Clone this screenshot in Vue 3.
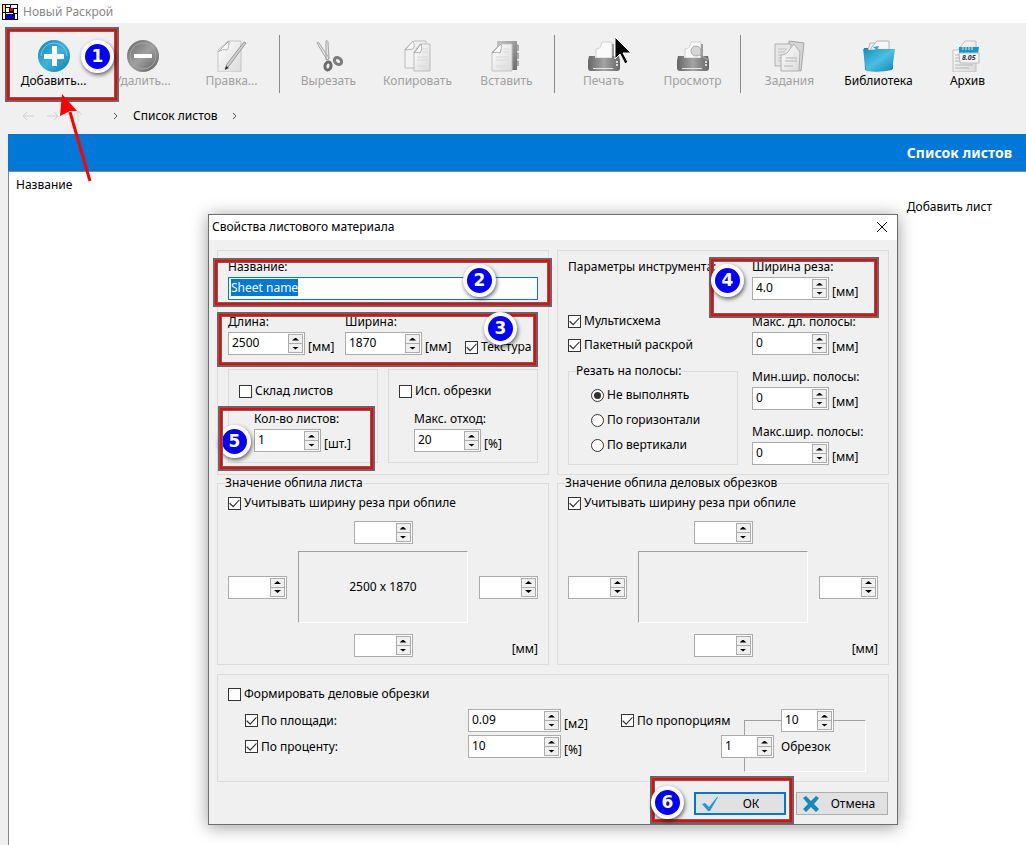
<template>
  <div class="app">
    <header class="titlebar">
      <svg class="app-icon" viewBox="0 0 16 16">
        <rect width="16" height="16" fill="#000" />
        <rect x="1" y="1" width="2" height="7" fill="#ffe600" />
        <rect x="4" y="1" width="4" height="2" fill="#fff" />
        <rect x="9" y="1" width="6" height="3" fill="#fff" />
        <rect x="4" y="4" width="3" height="4" fill="#fff" />
        <rect x="8" y="4" width="3" height="3" fill="#e00000" />
        <rect x="12" y="5" width="3" height="4" fill="#fff" />
        <rect x="1" y="9" width="2" height="6" fill="#fff" />
        <rect x="4" y="9" width="7" height="1" fill="#fff" />
        <rect x="4" y="11" width="8" height="4" fill="#0000e0" />
        <rect x="13" y="10" width="2" height="5" fill="#fff" />
      </svg>
      <span>Новый Раскрой</span>
    </header>

    <nav class="toolbar">
      <template v-for="(group, i) in toolGroups" :key="i">
        <span v-if="i > 0" class="divider"></span>
        <button v-for="tool in group" :key="tool.icon" class="tool" :disabled="tool.disabled">
          <svg class="tool-icon" viewBox="0 0 32 32">
            <g v-if="tool.icon === 'add'">
              <circle cx="16" cy="16" r="16" fill="url(#blueDisc)" />
              <path d="M3 16a13 13 0 0 1 26 0" fill="none" stroke="#7cc8e4" stroke-width="1" />
              <path d="M14 6h5v8h7v5h-7v7h-5v-7H6v-5h8z" fill="#fff" />
            </g>
            <g v-else-if="tool.icon === 'remove'">
              <circle cx="16" cy="16" r="16" fill="url(#grayDisc)" />
              <circle cx="16" cy="16" r="13" fill="none" stroke="#a5a5a5" stroke-width="1" />
              <rect x="7" y="14" width="18" height="4" fill="#fff" />
            </g>
            <g v-else-if="tool.icon === 'edit'">
              <path d="M12 1h13v31H2V10z" fill="url(#paper)" stroke="#c4c4c4" />
              <path d="M2 12L13 1c0 6-1 8-2 9-3-1-6 0-9 2z" fill="#f8f8f8" stroke="#b0b0b0" />
              <path d="M28 2l2 1-17 23-4 3 2-5z" fill="#cfcfcf" stroke="#9a9a9a" />
              <path d="M9 30l1-4 3 2z" fill="#333" />
            </g>
            <g v-else-if="tool.icon === 'cut'">
              <path d="M4 3c0-1 1-1 2 0l10 15-2 2zM13 1c1-1 2 0 2 1l1 17-3 1z" fill="#e4e4e4" stroke="#a4a4a4" />
              <ellipse cx="15" cy="26" rx="3" ry="4" fill="#f0f0f0" stroke="#6c6c6c" stroke-width="3" transform="rotate(12 15 26)" />
              <ellipse cx="25" cy="21" rx="3" ry="4" fill="#f0f0f0" stroke="#7c7c7c" stroke-width="3" transform="rotate(-50 25 21)" />
            </g>
            <g v-else-if="tool.icon === 'copy'">
              <path d="M12 1h12v27H3V9z" fill="#f2f2f2" stroke="#bcbcbc" />
              <path d="M3 10l8-9c2 3 1 7 0 8z" fill="#fafafa" stroke="#b4b4b4" />
              <path d="M18 4h10v27H12V12z" fill="url(#paper)" stroke="#bcbcbc" />
              <path d="M12 13l7-9c1 3 1 6-1 9-2-1-4-1-6 0z" fill="#fff" stroke="#a8a8a8" />
              <path d="M20 9h6M20 12h6M15 17h11M15 20h11M15 26h8" stroke="#d8d8d8" />
            </g>
            <g v-else-if="tool.icon === 'paste'">
              <path d="M6 1h20v29H6z" fill="url(#folder)" />
              <path d="M26 4l2 1v6h-2zM26 12l2 1v6h-2zM26 20l2 1v5h-2z" fill="#a9a9a9" />
              <path d="M9 4h12v27H1V12z" fill="url(#paper)" stroke="#c4c4c4" />
              <path d="M1 13l9-9c1 3 0 6-1 9-2-1-5-1-8 0z" fill="#fff" stroke="#a8a8a8" />
              <path d="M12 9h6M12 12h6M5 17h13M5 20h13M5 26h9" stroke="#d8d8d8" />
            </g>
            <g v-else-if="tool.icon === 'print' || tool.icon === 'preview'">
              <path d="M14 2h10v16H8V9c3-1 4 1 6-7z" fill="#fafafa" stroke="#cfcfcf" />
              <path d="M24 4h2v13h-2z" fill="#9d9d9d" />
              <path d="M1 16h6v2h17v-2h7l1 5v7q0 3-3 3H3q-3 0-3-3v-7z" fill="url(#printer)" />
              <path d="M5 28h20v1H5z" fill="#e4e4e4" />
              <path d="M28 22h2M28 25h2" stroke="#ddd" stroke-width="2" />
              <g v-if="tool.icon === 'preview'">
                <circle cx="19" cy="11" r="5" fill="#d6d6d6" stroke="#a8a8a8" />
                <path d="M23 15l8 5" stroke="#9a9a9a" stroke-width="2" />
              </g>
            </g>
            <g v-else-if="tool.icon === 'tasks'">
              <path d="M15 1l15 2-3 28-14-2z" fill="#d6d6d6" stroke="#a4a4a4" />
              <path d="M1 4h16v22H1z" fill="#e6e6e6" stroke="#b0b0b0" />
              <path d="M4 9h9M4 12h7M4 15h5M4 18h4M4 21h4" stroke="#c0c0c0" />
              <path d="M16 9L20 4l6 8-1 19H7V15q6 0 9-6z" fill="url(#paper)" stroke="#b0b0b0" />
              <path d="M12 18h11M11 21h12M10 26h9" stroke="#b8b8b8" />
            </g>
            <g v-else-if="tool.icon === 'library'">
              <path d="M1 8h8l2 3h19v18q-14 4-28 1z" fill="#1586ad" />
              <path d="M7 3h12l-1 11H4z" fill="#ededed" stroke="#bababa" />
              <path d="M14 1h12v14H8V8z" fill="#f6f6f6" stroke="#b4b4b4" />
              <path d="M10 7l6-1-2 4z" fill="#2aa5d0" />
              <path d="M0 9q2 2 15 0h17l-3 21q-13 3-26 1z" fill="url(#blueFolder)" />
            </g>
            <g v-else>
              <path d="M13 1h11v31H1V10h5z" fill="url(#paper)" stroke="#c0c0c0" />
              <path d="M3 15h8M3 18h8M3 21h8M3 25h18M3 28h14" stroke="#b4b4b4" />
              <path d="M7 7h20l-1 7H7z" fill="#1799c6" />
              <path d="M11 6v4M14 6v4M17 6v4M20 6v4" stroke="#d7eef6" />
              <path d="M7 13h20v10H8z" fill="#f4f4f4" stroke="#bbb" />
              <text x="10" y="20" class="cal-text">8.05</text>
            </g>
          </svg>
          <span>{{ tool.label }}</span>
        </button>
      </template>
    </nav>

    <nav class="crumbs">
      <svg class="nav-arrow" viewBox="0 0 12 12"><path d="M12 6H1M5 2L1 6l4 4" /></svg>
      <svg class="nav-arrow" viewBox="0 0 12 12"><path d="M0 6h11M7 2l4 4-4 4" /></svg>
      <svg class="nav-arrow" viewBox="0 0 12 12"><path d="M6 12V1M2 5l4-4 4 4" /></svg>
      <svg class="chevron first" viewBox="0 0 6 8"><path d="M1 1l3 3-3 3" /></svg>
      <a href="#" class="crumb">Список листов</a>
      <svg class="chevron" viewBox="0 0 6 8"><path d="M1 1l3 3-3 3" /></svg>
    </nav>

    <main class="list">
      <h1 class="list-title">Список листов</h1>
      <div class="list-body">
        <span class="column-name">Название</span>
        <a href="#" class="add-link">Добавить лист</a>
      </div>
    </main>

    <section class="dialog" role="dialog" aria-labelledby="dialog-title">
      <header class="dialog-head">
        <h2 id="dialog-title">Свойства листового материала</h2>
        <button class="close" aria-label="Закрыть">
          <svg viewBox="0 0 12 12"><path d="M1 1l10 10M11 1L1 11" /></svg>
        </button>
      </header>

      <form class="dialog-body" @submit.prevent>
        <div class="columns">
          <div class="panel">
            <div class="field">
              <label for="name">Название:</label>
              <input id="name" ref="nameInput" v-model="form.name" class="name-input" type="text" spellcheck="false" />
            </div>
            <div class="size-row">
              <div class="field">
                <label for="length">Длина:</label>
                <div class="measure"><SpinBox id="length" v-model="form.length" class="w77" /><span>[мм]</span></div>
              </div>
              <div class="field">
                <label for="width">Ширина:</label>
                <div class="measure"><SpinBox id="width" v-model="form.width" class="w77" /><span>[мм]</span></div>
              </div>
              <label class="check texture"><input v-model="form.texture" type="checkbox" />Текстура</label>
            </div>
            <div class="boxes">
              <div class="box">
                <label class="check"><input v-model="form.stock" type="checkbox" />Склад листов</label>
                <div class="field indent">
                  <label for="count">Кол-во листов:</label>
                  <div class="measure"><SpinBox id="count" v-model="form.count" class="w67" /><span>[шт.]</span></div>
                </div>
              </div>
              <div class="box">
                <label class="check"><input v-model="form.useOffcuts" type="checkbox" />Исп. обрезки</label>
                <div class="field indent">
                  <label for="waste">Макс. отход:</label>
                  <div class="measure"><SpinBox id="waste" v-model="form.waste" class="w67" /><span>[%]</span></div>
                </div>
              </div>
            </div>
          </div>

          <div class="panel tool-panel">
            <div class="tool-left">
              <span>Параметры инструмента:</span>
              <div class="tool-checks">
                <label class="check"><input v-model="form.multi" type="checkbox" />Мультисхема</label>
                <label class="check"><input v-model="form.batch" type="checkbox" />Пакетный раскрой</label>
              </div>
              <fieldset class="strips">
                <legend>Резать на полосы:</legend>
                <label v-for="mode in stripModes" :key="mode.value" class="check">
                  <input v-model="form.strips" type="radio" name="strips" :value="mode.value" />{{ mode.label }}
                </label>
              </fieldset>
            </div>
            <div class="tool-right">
              <div v-for="item in toolFields" :key="item.key" class="field">
                <label :for="item.key">{{ item.label }}</label>
                <div class="measure"><SpinBox :id="item.key" v-model="form[item.key]" class="w77" /><span>[мм]</span></div>
              </div>
            </div>
          </div>

          <fieldset v-for="trim in trims" :key="trim.title" class="trim">
            <legend>{{ trim.title }}</legend>
            <label class="check"><input v-model="trim.kerf" type="checkbox" />Учитывать ширину реза при обпиле</label>
            <div class="trim-grid">
              <SpinBox v-model="trim.top" class="w59 top" aria-label="Сверху" />
              <SpinBox v-model="trim.left" class="w59 left" aria-label="Слева" />
              <div class="sheet">{{ trim.size }}</div>
              <SpinBox v-model="trim.right" class="w59 right" aria-label="Справа" />
              <SpinBox v-model="trim.bottom" class="w59 bottom" aria-label="Снизу" />
              <span class="unit">[мм]</span>
            </div>
          </fieldset>
        </div>

        <div class="panel offcuts">
          <label class="check"><input v-model="form.makeOffcuts" type="checkbox" />Формировать деловые обрезки</label>
          <div class="offcut-row">
            <div class="offcut-limits">
              <label class="check"><input v-model="form.byArea" type="checkbox" />По площади:</label>
              <div class="measure"><SpinBox v-model="form.area" class="w93" aria-label="По площади" /><span>[м2]</span></div>
              <label class="check"><input v-model="form.byPercent" type="checkbox" />По проценту:</label>
              <div class="measure"><SpinBox v-model="form.percent" class="w93" aria-label="По проценту" /><span>[%]</span></div>
            </div>
            <label class="check ratio"><input v-model="form.byRatio" type="checkbox" />По пропорциям</label>
            <div class="ratio-grid">
              <div class="ratio-frame"></div>
              <SpinBox v-model="form.ratioX" class="w53 ratio-x" aria-label="Ширина обрезка" />
              <SpinBox v-model="form.ratioY" class="w53 ratio-y" aria-label="Высота обрезка" />
              <span class="ratio-name">Обрезок</span>
            </div>
          </div>
        </div>

        <footer class="actions">
          <button type="submit" class="action primary">
            <svg viewBox="0 0 16 16"><path d="M0 8l3-1 4 4L15 1l1 0L8 15 6 15z" fill="#1c9bd1" /></svg>
            <span>ОК</span>
          </button>
          <button type="button" class="action">
            <svg viewBox="0 0 16 16"><path d="M0 2l3-2 5 5 5-5 3 2-5 6 5 5-3 3-5-5-5 5-3-3 5-5z" fill="#1789b8" /></svg>
            <span>Отмена</span>
          </button>
        </footer>
      </form>

      <!-- шаги инструкции внутри окна -->
      <template v-for="n in [2, 3, 4, 5, 6]" :key="n">
        <div class="frame" :class="'frame-' + n"></div>
        <div class="badge" :class="'badge-' + n">{{ n }}</div>
      </template>
    </section>

    <div class="frame frame-1"></div>
    <div class="badge badge-1">1</div>
    <svg class="pointer-arrow" viewBox="0 0 34 90">
      <path d="M30 87L10 18" stroke="#f00" stroke-width="3" />
      <path d="M2 0L17 17 10 17 0 22z" fill="#f00" />
    </svg>
    <svg class="cursor" viewBox="0 0 18 30">
      <path d="M1 1v22l5-5 5 10 3-2-5-9h8z" fill="#000" stroke="#fff" stroke-width="1" />
    </svg>

    <svg class="defs" aria-hidden="true">
      <defs>
        <linearGradient id="blueDisc" x1="0" y1="0" x2="1" y2="1">
          <stop offset="0" stop-color="#1080b0" />
          <stop offset="0.5" stop-color="#3db4dc" />
          <stop offset="1" stop-color="#0f7fae" />
        </linearGradient>
        <linearGradient id="grayDisc" x1="0" y1="0" x2="1" y2="1">
          <stop offset="0" stop-color="#666" />
          <stop offset="0.5" stop-color="#a0a0a0" />
          <stop offset="1" stop-color="#5c5c5c" />
        </linearGradient>
        <linearGradient id="paper" x1="0" y1="0" x2="1" y2="1">
          <stop offset="0" stop-color="#fff" />
          <stop offset="1" stop-color="#dadada" />
        </linearGradient>
        <linearGradient id="folder" x1="0" y1="0" x2="1" y2="1">
          <stop offset="0" stop-color="#c4c4c4" />
          <stop offset="1" stop-color="#6c6c6c" />
        </linearGradient>
        <linearGradient id="printer" x1="0" y1="0" x2="1" y2="0">
          <stop offset="0" stop-color="#666" />
          <stop offset="0.5" stop-color="#a4a4a4" />
          <stop offset="1" stop-color="#666" />
        </linearGradient>
        <linearGradient id="blueFolder" x1="0" y1="0" x2="1" y2="1">
          <stop offset="0" stop-color="#1691bf" />
          <stop offset="0.5" stop-color="#49bfe4" />
          <stop offset="1" stop-color="#1284b0" />
        </linearGradient>
      </defs>
    </svg>
  </div>
</template>

<script setup>
import { h, onMounted, reactive, ref } from 'vue'

// поле с кнопками вверх/вниз
const SpinBox = (props, { emit, attrs }) => {
  const step = (d) => emit('update:modelValue', String(Number(props.modelValue || 0) + d))
  return h('span', { class: ['spin', attrs.class] }, [
    h('input', {
      type: 'text',
      id: attrs.id,
      'aria-label': attrs['aria-label'],
      value: props.modelValue,
      onInput: (e) => emit('update:modelValue', e.target.value)
    }),
    h('span', { class: 'spin-buttons' }, [
      h('button', { type: 'button', class: 'up', tabindex: -1, 'aria-label': 'Больше', onClick: () => step(1) }),
      h('button', { type: 'button', class: 'down', tabindex: -1, 'aria-label': 'Меньше', onClick: () => step(-1) })
    ])
  ])
}
SpinBox.props = ['modelValue']
SpinBox.emits = ['update:modelValue']
SpinBox.inheritAttrs = false

const toolGroups = [
  [
    { icon: 'add', label: 'Добавить...' },
    { icon: 'remove', label: 'Удалить...', disabled: true },
    { icon: 'edit', label: 'Правка...', disabled: true }
  ],
  [
    { icon: 'cut', label: 'Вырезать', disabled: true },
    { icon: 'copy', label: 'Копировать', disabled: true },
    { icon: 'paste', label: 'Вставить', disabled: true }
  ],
  [
    { icon: 'print', label: 'Печать', disabled: true },
    { icon: 'preview', label: 'Просмотр', disabled: true }
  ],
  [
    { icon: 'tasks', label: 'Задания', disabled: true },
    { icon: 'library', label: 'Библиотека' },
    { icon: 'archive', label: 'Архив' }
  ]
]

const stripModes = [
  { value: 'none', label: 'Не выполнять' },
  { value: 'horizontal', label: 'По горизонтали' },
  { value: 'vertical', label: 'По вертикали' }
]

const toolFields = [
  { key: 'kerf', label: 'Ширина реза:' },
  { key: 'maxLength', label: 'Макс. дл. полосы:' },
  { key: 'minWidth', label: 'Мин.шир. полосы:' },
  { key: 'maxWidth', label: 'Макс.шир. полосы:' }
]

const form = reactive({
  name: 'Sheet name',
  length: '2500',
  width: '1870',
  texture: true,
  stock: false,
  count: '1',
  useOffcuts: false,
  waste: '20',
  multi: true,
  batch: true,
  strips: 'none',
  kerf: '4.0',
  maxLength: '0',
  minWidth: '0',
  maxWidth: '0',
  makeOffcuts: false,
  byArea: true,
  area: '0.09',
  byPercent: true,
  percent: '10',
  byRatio: true,
  ratioX: '10',
  ratioY: '1'
})

const trims = reactive([
  { title: 'Значение обпила листа', kerf: true, size: '2500 x 1870', top: '', left: '', right: '', bottom: '' },
  { title: 'Значение обпила деловых обрезков', kerf: true, size: '', top: '', left: '', right: '', bottom: '' }
])

const nameInput = ref(null)

onMounted(() => {
  nameInput.value.focus()
  nameInput.value.select()
})
</script>

<style>
body {
  background: #f0f0f0;
}

.spin {
  display: flex;
  box-sizing: border-box;
  height: 23px;
  padding: 1px;
  border: 1px solid #ababab;
  background: #fff;
}

.spin input {
  flex: 1;
  min-width: 0;
  padding: 0 2px 2px;
  border: none;
  outline: none;
  background: none;
  color: #000;
  font: inherit;
}

.spin-buttons {
  display: flex;
  flex-direction: column;
  width: 15px;
}

.spin-buttons button {
  display: flex;
  flex: 1;
  align-items: center;
  justify-content: center;
  min-height: 0;
  padding: 0;
  border: 1px solid #ababab;
  background: #f0f0f0;
}

.spin-buttons .down {
  border-top: none;
}

.spin-buttons button::before {
  content: '';
  width: 7px;
  height: 3px;
  background: #000;
  clip-path: polygon(50% 0, 100% 100%, 0 100%);
}

.spin-buttons .down::before {
  clip-path: polygon(0 0, 100% 0, 50% 100%);
}
</style>

<style scoped>
.app {
  position: relative;
  display: flex;
  flex-direction: column;
  min-height: 100vh;
  overflow: hidden;
  background: #f0f0f0;
  color: #000;
  font-family: 'Noto Sans', 'Open Sans', sans-serif;
  font-size: 12px;
  line-height: 16px;
}

.titlebar {
  display: flex;
  align-items: center;
  gap: 5px;
  height: 23px;
  padding-left: 2px;
  background: #fff;
  color: #888;
}

.app-icon {
  width: 16px;
  height: 16px;
}

.toolbar {
  display: flex;
  padding: 12px 0 0 9px;
}

.divider {
  width: 1px;
  height: 58px;
  margin: 0 4px 0 3px;
  background: #8a8a8a;
}

.tool {
  display: flex;
  flex-direction: column;
  align-items: center;
  gap: 1px;
  width: 89px;
  padding: 5px 0 4px;
  border: none;
  background: none;
  color: #000;
  font: inherit;
  white-space: nowrap;
}

.tool:disabled {
  color: #a0a0a0;
}

.tool-icon {
  width: 32px;
  height: 32px;
}

.cal-text {
  font-size: 7px;
  font-weight: bold;
  font-style: italic;
  fill: #333;
}

.crumbs {
  display: flex;
  box-sizing: border-box;
  align-items: center;
  height: 41px;
  padding: 4px 0 0 22px;
}

.nav-arrow {
  width: 12px;
  height: 12px;
  margin-right: 13px;
  fill: none;
  stroke: #d0d0d0;
}

.chevron {
  width: 6px;
  height: 8px;
  fill: none;
  stroke: #555;
}

.chevron.first {
  margin-left: 16px;
}

.crumb {
  margin: 0 14px;
  color: #000;
  text-decoration: none;
}

.list {
  display: flex;
  flex: 1;
  flex-direction: column;
  margin-left: 8px;
}

.list-title {
  height: 37px;
  margin: 0;
  padding-right: 14px;
  background: #0078d7;
  color: #fff;
  font-size: 14px;
  line-height: 37px;
  text-align: right;
}

.list-body {
  display: flex;
  flex: 1;
  justify-content: space-between;
  border-top: 1px solid #828790;
  border-left: 1px solid #828790;
  background: #fff;
}

.column-name {
  padding: 5px 7px;
}

.add-link {
  padding: 27px 34px 0 0;
  color: #000;
  text-decoration: none;
}

.dialog {
  position: absolute;
  top: 214px;
  left: 208px;
  box-sizing: border-box;
  width: 690px;
  border: 1px solid #6e6e6e;
  background: #f0f0f0;
  box-shadow: 0 2px 16px rgba(0, 0, 0, 0.4);
}

.dialog-head {
  display: flex;
  box-sizing: border-box;
  align-items: center;
  justify-content: space-between;
  height: 25px;
  padding: 0 9px 2px 3px;
  background: #fff;
}

.dialog-head h2 {
  margin: 0;
  font-size: 12px;
  font-weight: normal;
}

.close {
  display: flex;
  padding: 0;
  border: none;
  background: none;
}

.close svg {
  width: 12px;
  height: 12px;
  fill: none;
  stroke: #000;
}

.dialog-body {
  padding: 10px 8px 9px;
}

.columns {
  display: grid;
  grid-template-columns: 1fr 1fr;
  column-gap: 8px;
}

.panel {
  min-width: 0;
  padding: 8px 10px 9px;
  border: 1px solid #dcdcdc;
}

.field {
  display: flex;
  flex-direction: column;
  gap: 2px;
  white-space: nowrap;
}

.name-input {
  box-sizing: border-box;
  width: 100%;
  height: 23px;
  padding: 0 2px 2px;
  border: 1px solid #0078d7;
  outline: none;
  background: #fff;
  color: #000;
  font: inherit;
}

.name-input::selection {
  background: #0078d7;
  color: #fff;
}

.measure {
  display: flex;
  gap: 3px;
}

.measure > span:last-child {
  padding-top: 7px;
  height: 16px;
}

.w53 {
  width: 53px;
}

.w59 {
  width: 59px;
}

.w67 {
  width: 67px;
}

.w77 {
  width: 77px;
}

.w93 {
  width: 93px;
}

.size-row {
  display: grid;
  grid-template-columns: 117px 120px 1fr;
  margin: 14px 0;
}

.check {
  display: flex;
  align-items: center;
  gap: 3px;
  white-space: nowrap;
}

.check input {
  flex: none;
  width: 13px;
  height: 13px;
  margin: 0;
  border: 1px solid #333;
  background: #fff;
  appearance: none;
}

.check input[type='checkbox']:checked::before {
  content: '';
  display: block;
  width: 11px;
  height: 11px;
  background: #333;
  clip-path: polygon(10% 48%, 38% 76%, 92% 18%, 98% 26%, 38% 92%, 2% 56%);
}

.check input[type='radio'] {
  border-radius: 50%;
}

.check input[type='radio']:checked::before {
  content: '';
  display: block;
  width: 7px;
  height: 7px;
  margin: 2px;
  border-radius: 50%;
  background: #333;
}

.texture {
  align-self: end;
}

.boxes {
  display: grid;
  grid-template-columns: 1fr 1fr;
  gap: 10px;
}

.box {
  padding: 13px 10px 10px;
  border: 1px solid #dcdcdc;
}

.indent {
  margin: 12px 0 0 15px;
}

.tool-panel {
  display: flex;
  gap: 14px;
}

.tool-left {
  display: flex;
  flex-direction: column;
  width: 170px;
  white-space: nowrap;
}

.tool-checks {
  display: flex;
  flex-direction: column;
  gap: 8px;
  margin: 38px 0 10px;
}

.strips {
  display: flex;
  flex: 1;
  flex-direction: column;
  gap: 9px;
  margin: 0;
  padding: 8px 22px;
  border: 1px solid #dcdcdc;
}

.strips legend {
  margin-left: -15px;
  padding: 0;
}

.tool-right {
  display: flex;
  flex: 1;
  flex-direction: column;
  gap: 14px;
}

.trim {
  min-width: 0;
  margin: 0;
  padding: 4px 10px 7px;
  border: 1px solid #dcdcdc;
}

.trim legend {
  margin-left: -3px;
  padding: 0;
}

.trim-grid {
  display: grid;
  grid-template-columns: 59px 1fr 59px;
  grid-template-rows: 23px 72px 27px;
  gap: 7px 11px;
  margin-top: 10px;
  align-items: center;
  justify-items: center;
}

.top {
  grid-area: 1 / 2;
}

.left {
  grid-area: 2 / 1;
}

.sheet {
  display: flex;
  grid-area: 2 / 2;
  align-items: center;
  justify-content: center;
  box-sizing: border-box;
  width: 100%;
  height: 100%;
  border: 1px solid;
  border-color: #a0a0a0 #fff #fff #a0a0a0;
}

.right {
  grid-area: 2 / 3;
}

.bottom {
  grid-area: 3 / 2;
  align-self: end;
}

.unit {
  grid-area: 3 / 3;
  align-self: end;
  justify-self: end;
}

.offcuts {
  margin-top: 9px;
  padding-top: 11px;
}

.offcut-row {
  display: flex;
  margin-top: 7px;
}

.offcut-limits {
  display: grid;
  grid-template-columns: 223px 153px;
  grid-auto-rows: 23px;
  row-gap: 3px;
  padding-left: 17px;
}

.ratio {
  width: 100px;
  height: 23px;
}

.ratio-grid {
  display: grid;
  grid-template-columns: 23px 30px 7px 53px 32px;
  grid-template-rows: 11px 12px 3px 23px 14px;
}

.ratio-frame {
  grid-area: 2 / 2 / -1 / -1;
  border: 1px solid;
  border-color: #a0a0a0 #fff #fff #a0a0a0;
}

.ratio-x {
  grid-area: 1 / 4 / 3 / 5;
}

.ratio-y {
  grid-area: 4 / 1 / 5 / 3;
}

.ratio-name {
  grid-area: 4 / 4 / 5 / 6;
  align-self: center;
}

.actions {
  display: flex;
  justify-content: flex-end;
  gap: 10px;
  margin-top: 10px;
  padding-right: 1px;
}

.action {
  display: flex;
  align-items: center;
  width: 92px;
  height: 23px;
  padding: 0 0 0 6px;
  border: 1px solid #adadad;
  background: #e1e1e1;
  color: #000;
  font: inherit;
}

.action.primary {
  border: 2px solid #0078d7;
}

.action svg {
  width: 16px;
  height: 16px;
}

.action span {
  flex: 1;
  text-align: center;
}

.frame {
  position: absolute;
  box-sizing: border-box;
  border: 2px solid #666;
  box-shadow: inset 0 0 0 2px #f00, inset 0 0 0 3px #666;
  pointer-events: none;
}

.badge {
  position: absolute;
  box-sizing: border-box;
  width: 33px;
  height: 33px;
  border: 4px solid #fff;
  border-radius: 50%;
  background: #00f;
  box-shadow: 1px 2px 4px rgba(0, 0, 0, 0.6);
  color: #fff;
  font-family: 'DejaVu Sans', sans-serif;
  font-size: 17px;
  font-weight: bold;
  line-height: 25px;
  text-align: center;
}

.frame-1 {
  top: 27px;
  left: 5px;
  width: 114px;
  height: 75px;
}

.badge-1 {
  top: 40px;
  left: 81px;
}

.frame-2 {
  top: 43px;
  left: 4px;
  width: 339px;
  height: 49px;
}

.badge-2 {
  top: 49px;
  left: 254px;
}

.frame-3 {
  top: 97px;
  left: 8px;
  width: 321px;
  height: 55px;
}

.badge-3 {
  top: 97px;
  left: 275px;
}

.frame-4 {
  top: 42px;
  left: 500px;
  width: 170px;
  height: 61px;
}

.badge-4 {
  top: 49px;
  left: 502px;
}

.frame-5 {
  z-index: 1;
  top: 191px;
  left: 9px;
  width: 157px;
  height: 65px;
}

.badge-5 {
  top: 210px;
  left: 9px;
}

.frame-6 {
  top: 561px;
  left: 441px;
  width: 144px;
  height: 48px;
}

.badge-6 {
  top: 571px;
  left: 442px;
}

.pointer-arrow {
  position: absolute;
  top: 94px;
  left: 60px;
  width: 34px;
  height: 90px;
}

.cursor {
  position: absolute;
  top: 36px;
  left: 614px;
  width: 18px;
  height: 30px;
}

.defs {
  position: absolute;
  width: 0;
  height: 0;
}
</style>
